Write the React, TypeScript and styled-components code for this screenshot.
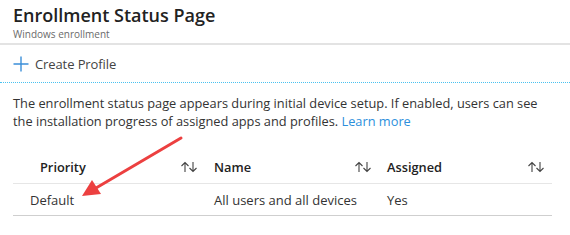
import React from 'react';
import styled, { createGlobalStyle } from 'styled-components';

const GlobalStyle = createGlobalStyle`
  html, body {
    margin: 0;
    padding: 0;
    background: #fff;
  }
  body {
    font-family: 'Open Sans', 'Noto Sans', sans-serif;
    color: #333;
  }
`;

const Page = styled.div`
  width: 570px;
  height: 235px;
  overflow: hidden;
  position: relative;
`;

const Header = styled.header`
  padding: 3px 13px 0;
  height: 45px;
  box-sizing: border-box;
  border-bottom: 2px solid #e3e3e3;
`;

const Title = styled.h1`
  margin: 0;
  font-size: 18px;
  line-height: 24px;
  font-weight: 600;
  color: #222;
`;

const Subtitle = styled.div`
  font-size: 10px;
  line-height: 14px;
  color: #6a6a6a;
`;

const Toolbar = styled.div`
  height: 38px;
  box-sizing: border-box;
  padding: 0 13px;
  display: flex;
  align-items: center;
  border-bottom: 1px dotted #48c2f0;
`;

const ToolButton = styled.span`
  display: flex;
  align-items: center;
  gap: 6px;
  font-size: 13px;
  letter-spacing: -0.1px;
  color: #444;
`;

const Intro = styled.p`
  margin: 11px 13px 0;
  font-size: 12.8px;
  line-height: 18px;
  color: #333;
`;

const Link = styled.a`
  color: #2d8fdc;
  text-decoration: none;
`;

const Table = styled.div`
  margin: 20px 18px 0 13px;
  display: grid;
  grid-template-columns: 192px 174px 1fr;
`;

const HeadCell = styled.div<{ $pad: number }>`
  height: 34px;
  box-sizing: border-box;
  padding-left: ${(p) => p.$pad}px;
  padding-right: 7px;
  display: flex;
  align-items: center;
  justify-content: space-between;
  font-size: 12.8px;
  font-weight: 600;
  color: #222;
  border-bottom: 1px solid #e6e6e6;
`;

const Cell = styled.div<{ $pad: number }>`
  height: 32px;
  box-sizing: border-box;
  padding-left: ${(p) => p.$pad}px;
  display: flex;
  align-items: center;
  font-size: 13px;
  color: #333;
  border-bottom: 1px solid #cfcfcf;
`;

const Arrow = styled.svg`
  position: absolute;
  left: 0;
  top: 0;
  pointer-events: none;
`;

const PlusIcon = () => (
  <svg width="16" height="16" viewBox="0 0 16 16">
    <path d="M8 0.5v15M0.5 8h15" stroke="#3b8fd9" strokeWidth="1.4" fill="none" />
  </svg>
);

const SortIcon = () => (
  <svg width="18" height="12" viewBox="0 0 18 12">
    <g stroke="#444" strokeWidth="1.1" fill="none">
      <path d="M5 11V1.5M1.5 5L5 1.5L8.5 5" />
      <path d="M13 1v9.5M9.5 7L13 10.5L16.5 7" />
    </g>
  </svg>
);

const columns = [
  { head: 'Priority', headPad: 27, cellPad: 17, value: 'Default' },
  { head: 'Name', headPad: 9, cellPad: 9, value: 'All users and all devices' },
  { head: 'Assigned', headPad: 8, cellPad: 8, value: 'Yes' },
];

const App = () => (
  <Page>
    <GlobalStyle />
    <Header>
      <Title>Enrollment Status Page</Title>
      <Subtitle>Windows enrollment</Subtitle>
    </Header>
    <Toolbar>
      <ToolButton>
        <PlusIcon />
        Create Profile
      </ToolButton>
    </Toolbar>
    <Intro>
      The enrollment status page appears during initial device setup. If enabled, users can see
      the installation progress of assigned apps and profiles. <Link href="#">Learn more</Link>
    </Intro>
    <Table>
      {columns.map((c) => (
        <HeadCell key={c.head} $pad={c.headPad}>
          {c.head}
          <SortIcon />
        </HeadCell>
      ))}
      {columns.map((c) => (
        <Cell key={c.head} $pad={c.cellPad}>
          {c.value}
        </Cell>
      ))}
    </Table>
    <Arrow width="570" height="235">
      <line x1="181" y1="138" x2="96" y2="188" stroke="#ec4040" strokeWidth="3" strokeLinecap="round" />
      <path d="M82 196L92 180L101 194Z" fill="#ec4040" />
    </Arrow>
  </Page>
);

export default App;
